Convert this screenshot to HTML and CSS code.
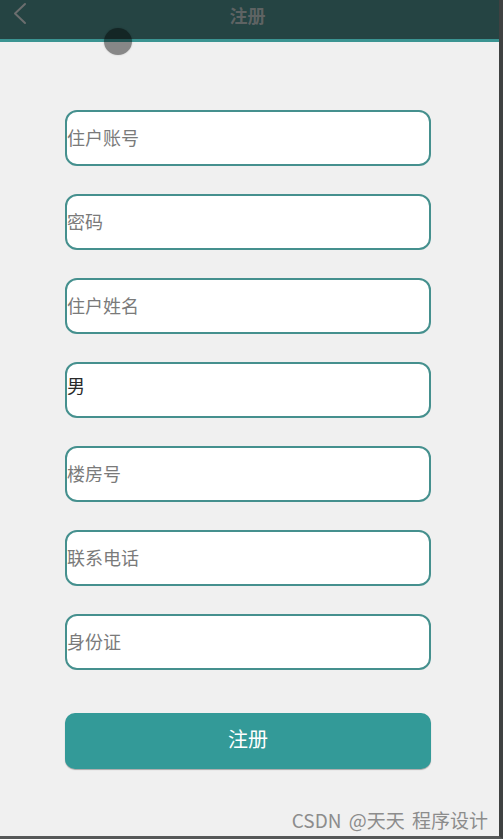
FILE: index.html
```html
<!DOCTYPE html>
<html lang="zh">
<head>
<meta charset="utf-8">
<title>注册</title>
<link rel="stylesheet" href="styles.css">
</head>
<body>
<div class="frame">
  <header class="topbar">
    <svg class="back" width="16" height="24" viewBox="0 0 16 24" aria-hidden="true">
      <polyline points="12,2 2,11.5 12,21" fill="none" stroke="#6b6e6e" stroke-width="2" stroke-linecap="round" stroke-linejoin="round"/>
    </svg>
    <h1 class="title">注册</h1>
    <span></span>
  </header>
  <main class="form">
    <div class="field">住户账号</div>
    <div class="field">密码</div>
    <div class="field">住户姓名</div>
    <div class="field field-select">男</div>
    <div class="field">楼房号</div>
    <div class="field">联系电话</div>
    <div class="field">身份证</div>
    <button class="submit" type="button">注册</button>
  </main>
  <footer class="watermark">CSDN @天天 程序设计</footer>
  <div class="touch"></div>
</div>
</body>
</html>
```
FILE: styles.css
```css
html, body {
  margin: 0;
  padding: 0;
  background: #f0f0f0;
}
body {
  font-family: "Noto Sans CJK SC", "Noto Sans", sans-serif;
}
.frame {
  position: relative;
  width: 503px;
  height: 839px;
  box-sizing: border-box;
  border-right: 4px solid #3f4141;
  border-bottom: 3px solid #565858;
  background: #f0f0f0;
  display: flex;
  flex-direction: column;
  overflow: hidden;
}
.topbar {
  height: 39px;
  background: #254443;
  border-bottom: 3px solid #3b9492;
  display: grid;
  grid-template-columns: 40px 1fr 40px;
  align-items: start;
}
.back {
  margin: 2px 0 0 13px;
  display: block;
}
.title {
  margin: 0;
  padding: 6px 4px 0 0;
  text-align: center;
  font-size: 18px;
  line-height: 18px;
  font-weight: bold;
  color: #5e6363;
}
.form {
  padding: 68px 68px 0 65px;
  display: flex;
  flex-direction: column;
  gap: 28px;
}
.field {
  height: 56px;
  box-sizing: border-box;
  border: 2px solid #45908e;
  border-radius: 12px;
  background: #ffffff;
  display: flex;
  align-items: center;
  padding-bottom: 2px;
  font-size: 18px;
  line-height: 18px;
  color: #7a7a7a;
}
.field-select {
  align-items: flex-start;
  padding-top: 12px;
  color: #2a2a2a;
}
.submit {
  margin-top: 15px;
  height: 56px;
  padding: 0 0 5px 0;
  border: none;
  border-radius: 10px;
  background: #339a98;
  color: #ffffff;
  font-family: inherit;
  font-size: 20px;
  box-shadow: 0 1px 1px rgba(0, 0, 0, 0.3);
}
.watermark {
  margin-top: auto;
  padding: 0 11px 6px 0;
  text-align: right;
  font-size: 19px;
  line-height: 20px;
  word-spacing: 3px;
  color: #8c8c8c;
}
.touch {
  position: absolute;
  left: 104px;
  top: 28px;
  width: 28px;
  height: 27px;
  border-radius: 50%;
  background: rgba(0, 0, 0, 0.44);
  box-shadow: 0 0 2px rgba(0, 0, 0, 0.2);
}
```
